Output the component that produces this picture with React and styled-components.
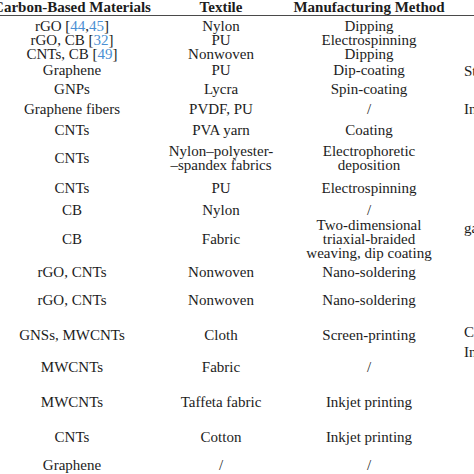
import styled, { createGlobalStyle } from "styled-components";

const GlobalStyle = createGlobalStyle`
  html, body {
    margin: 0;
    padding: 0;
    background: #ffffff;
  }
  body {
    width: 474px;
    height: 474px;
    overflow: hidden;
    font-family: "Liberation Serif", "Times New Roman", serif;
    color: #1c1c1c;
  }
`;

const Page = styled.div`
  width: 474px;
  height: 474px;
  overflow: hidden;
  background: #ffffff;
`;

const Table = styled.div`
  width: 600px;
  margin-top: -2px;
  font-size: 15px;
  line-height: 14px;
`;

const Row = styled.div`
  display: grid;
  grid-template-columns: 144px 154px 142px 1fr;
  align-items: center;
  height: ${(props) => props.h}px;
`;

const HeadRow = styled(Row)`
  font-weight: 700;
  border-bottom: 1px solid #4a4a4a;
  white-space: nowrap;
`;

const Body = styled.div`
  padding-top: 3px;
`;

const Cell = styled.div`
  text-align: center;
  white-space: nowrap;
  display: flex;
  flex-direction: column;
  align-items: center;
  justify-content: center;
`;

const Line = styled.span`
  display: block;
`;

const Side = styled.div`
  white-space: nowrap;
  padding-left: 24px;
  align-self: ${(props) => (props.top ? "start" : "center")};
  padding-top: ${(props) => props.top || 0}px;
  line-height: ${(props) => (props.lh ? props.lh : 14)}px;
`;

const Ref = styled.span`
  color: #4a8fd3;
`;

const rows = [
  { h: 14, a: [<>rGO [<Ref>44</Ref>,<Ref>45</Ref>]</>], b: ["Nylon"], c: ["Dipping"] },
  { h: 14, a: [<>rGO, CB [<Ref>32</Ref>]</>], b: ["PU"], c: ["Electrospinning"] },
  { h: 14, a: [<>CNTs, CB [<Ref>49</Ref>]</>], b: ["Nonwoven"], c: ["Dipping"] },
  { h: 17, a: ["Graphene"], b: ["PU"], c: ["Dip-coating"], d: ["Strain sensor"], top: 3 },
  { h: 22, a: ["GNPs"], b: ["Lycra"], c: ["Spin-coating"] },
  { h: 18, a: ["Graphene fibers"], b: ["PVDF, PU"], c: ["/"], d: ["Integrated sensor"] },
  { h: 24, a: ["CNTs"], b: ["PVA yarn"], c: ["Coating"] },
  { h: 32, a: ["CNTs"], b: ["Nylon–polyester-", "–spandex fabrics"], c: ["Electrophoretic", "deposition"] },
  { h: 28, a: ["CNTs"], b: ["PU"], c: ["Electrospinning"] },
  { h: 16, a: ["CB"], b: ["Nylon"], c: ["/"] },
  { h: 34, a: ["CB"], b: ["Fabric"], c: ["Two-dimensional", "triaxial-braided", "weaving, dip coating"], d: ["gauge"], top: 3 },
  { h: 40, a: ["rGO, CNTs"], b: ["Nonwoven"], c: ["Nano-soldering"] },
  { h: 16, a: ["rGO, CNTs"], b: ["Nonwoven"], c: ["Nano-soldering"] },
  { h: 42, a: ["GNSs, MWCNTs"], b: ["Cloth"], c: ["Screen-printing"], d: ["Circuit", "Interconnect"], top: 14, lh: 20 },
  { h: 34, a: ["MWCNTs"], b: ["Fabric"], c: ["/"] },
  { h: 36, a: ["MWCNTs"], b: ["Taffeta fabric"], c: ["Inkjet printing"] },
  { h: 34, a: ["CNTs"], b: ["Cotton"], c: ["Inkjet printing"] },
  { h: 22, a: ["Graphene"], b: ["/"], c: ["/"] },
];

const Lines = ({ items }) =>
  items.map((line, i) => <Line key={i}>{line}</Line>);

export default function App() {
  return (
    <Page>
      <GlobalStyle />
      <Table>
        <HeadRow h={17}>
          <Cell>Carbon-Based Materials</Cell>
          <Cell>Textile</Cell>
          <Cell>Manufacturing Method</Cell>
          <Side />
        </HeadRow>
        <Body>
          {rows.map((r, i) => (
            <Row key={i} h={r.h}>
              <Cell>
                <Lines items={r.a} />
              </Cell>
              <Cell>
                <Lines items={r.b} />
              </Cell>
              <Cell>
                <Lines items={r.c} />
              </Cell>
              <Side top={r.top} lh={r.lh}>
                {r.d && <Lines items={r.d} />}
              </Side>
            </Row>
          ))}
        </Body>
      </Table>
    </Page>
  );
}
